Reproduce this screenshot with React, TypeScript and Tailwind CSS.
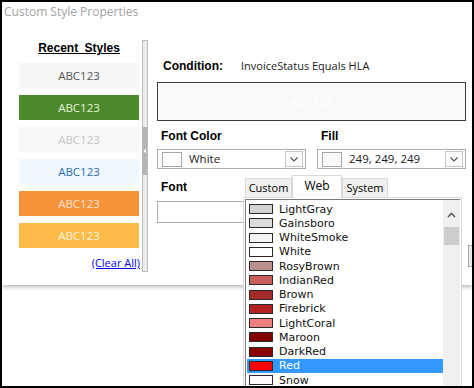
import clsx from 'clsx';

const recentStyles = [
  { box: 'bg-[#f6f6f6] text-[#555555]' },
  { box: 'bg-[#4a8a2b] text-[#e6f3d8]' },
  { box: 'bg-[#f7f7f7] text-[#c6c6c6]' },
  { box: 'bg-[#f0f8ff] text-[#2f6ea8]' },
  { box: 'bg-[#f7913a] text-[#fde4cf]' },
  { box: 'bg-[#fdbb48] text-[#fff1d8]' },
];

const webColors = [
  { name: 'LightGray', swatch: 'bg-[#d3d3d3]' },
  { name: 'Gainsboro', swatch: 'bg-[#dcdcdc]' },
  { name: 'WhiteSmoke', swatch: 'bg-[#f5f5f5]' },
  { name: 'White', swatch: 'bg-[#ffffff]' },
  { name: 'RosyBrown', swatch: 'bg-[#bc8f8f]' },
  { name: 'IndianRed', swatch: 'bg-[#cd5c5c]' },
  { name: 'Brown', swatch: 'bg-[#a52a2a]' },
  { name: 'Firebrick', swatch: 'bg-[#b22222]' },
  { name: 'LightCoral', swatch: 'bg-[#f08080]' },
  { name: 'Maroon', swatch: 'bg-[#800000]' },
  { name: 'DarkRed', swatch: 'bg-[#8b0000]' },
  { name: 'Red', swatch: 'bg-[#ff0000]', selected: true },
  { name: 'Snow', swatch: 'bg-[#fffafa]' },
];

function Chevron() {
  return (
    <svg width="8" height="5" viewBox="0 0 8 5">
      <path d="M0.5 0.5 L4 4 L7.5 0.5" fill="none" stroke="#505050" strokeWidth="1.1" />
    </svg>
  );
}

function ColorCombo({ swatch, label }: { swatch: string; label: string }) {
  return (
    <div className="flex h-[20px] w-[149px] items-center border border-[#adadad] bg-white pl-[4px] pr-[2px]">
      <span className={clsx('h-[15px] w-[20px] shrink-0 border border-[#a6a6a6]', swatch)} />
      <span className="ml-[7px] flex-1 text-[11.5px] leading-none text-[#1a1a1a]">{label}</span>
      <span className="flex h-[16px] w-[18px] items-center justify-center border border-[#c8c8c8] bg-[#fbfbfb]">
        <Chevron />
      </span>
    </div>
  );
}

function ColorPopup() {
  return (
    <div className="absolute left-[241px] top-[173px] w-[219px] [font-family:'Open_Sans',sans-serif]">
      {/* tab strip */}
      <div className="flex h-[22px] items-end pl-[2px] text-[11px] text-black">
        <div className="flex h-[19px] w-[47px] items-center justify-center border border-b-0 border-[#d9d9d9] bg-[#f0f0f0]">
          Custom
        </div>
        <div className="relative z-10 mb-[-1px] flex h-[23px] w-[50px] items-start justify-center border border-b-0 border-[#d9d9d9] bg-white pt-[1px] text-[12px]">
          Web
        </div>
        <div className="flex h-[19px] w-[46px] items-center justify-center border border-b-0 border-[#d9d9d9] bg-[#f0f0f0]">
          System
        </div>
      </div>

      {/* list */}
      <div className="h-[200px] border border-[#d9d9d9] bg-white p-[1px]">
        <div className="flex h-full border-l border-t border-[#7a7a7a]">
          <div className="flex-1 pt-[2px] [font-family:'DejaVu_Sans',sans-serif]">
            {webColors.map((c) => (
              <div
                key={c.name}
                className={clsx(
                  'ml-[1px] flex h-[14.25px] items-center gap-[6px] pl-[2px] text-[11px] leading-none',
                  c.selected ? 'bg-[#3399ff] text-white' : 'text-[#111111]'
                )}
              >
                <span className={clsx('h-[10px] w-[24px] shrink-0 border border-[#2a2a2a]', c.swatch)} />
                <span>{c.name}</span>
              </div>
            ))}
          </div>
          <div className="flex w-[17px] flex-col bg-[#f0f0f0]">
            <div className="flex h-[27px] items-center justify-center pt-[2px]">
              <svg width="9" height="6" viewBox="0 0 9 6">
                <path d="M1 5 L4.5 1.5 L8 5" fill="none" stroke="#606060" strokeWidth="1.6" />
              </svg>
            </div>
            <div className="mx-[1px] h-[18px] bg-[#cdcdcd]" />
          </div>
        </div>
      </div>
    </div>
  );
}

export default function App() {
  return (
    <div className="relative h-[388px] w-[474px] overflow-hidden border-2 border-black bg-white [font-family:'Open_Sans',sans-serif]">
      <div className="flex h-[283px] flex-col bg-white shadow-[0_2px_4px_rgba(0,0,0,0.28)]">
        {/* title */}
        <div className="h-[22px] pl-[2px] pt-[1px] text-[12px] leading-[18px] text-[#a3a3a3]">
          Custom Style Properties
        </div>

        <div className="flex flex-1">
          {/* recent styles */}
          <div className="w-[140px] pl-[17px]">
            <div className="w-[120px] pt-[16px] text-center text-[12px] font-bold leading-[16px] text-black underline [font-family:'Liberation_Sans',sans-serif] [word-spacing:3px]">
              Recent Styles
            </div>
            <div className="mt-[7px] flex w-[120px] flex-col gap-[7px]">
              {recentStyles.map((s, i) => (
                <div key={i} className={clsx('flex h-[25px] items-center justify-center text-[11.5px]', s.box)}>
                  ABC123
                </div>
              ))}
            </div>
            <div className="mt-[8px] w-[121px] text-right text-[11px] leading-[14px] text-[#0000ee] underline">
              (Clear All)
            </div>
          </div>

          {/* splitter */}
          <div className="mt-[16px] flex h-[232px] w-[6px] flex-col border border-[#bdbdbd] bg-[#ececec]">
            <div className="mt-[86px] flex h-[48px] items-center bg-[#b4b4b4]">
              <svg width="4" height="6" viewBox="0 0 4 6">
                <path d="M3 0.5 L0.5 3 L3 5.5 Z" fill="#ffffff" />
              </svg>
            </div>
          </div>

          {/* editor */}
          <div className="ml-[9px] flex flex-1 flex-col">
            <div className="mt-[34px] flex h-[16px] items-center pl-[6px]">
              <span className="w-[78px] text-[12px] font-bold text-black [font-family:'Liberation_Sans',sans-serif]">
                Condition:
              </span>
              <span className="text-[11px] text-[#1a1a1a]">InvoiceStatus Equals HLA</span>
            </div>

            <div className="mt-[8px] flex h-[39px] w-[309px] items-center justify-center border border-[#3c3c3c] bg-[#f9f9f9] text-[11.5px] text-white">
              ABC123
            </div>

            <div className="mt-[7px] flex gap-[11px] text-[12px] font-bold leading-[16px] text-black [font-family:'Liberation_Sans',sans-serif]">
              <span className="w-[149px] pl-[4px]">Font Color</span>
              <span className="pl-[4px]">Fill</span>
            </div>
            <div className="mt-[5px] flex gap-[11px]">
              <ColorCombo swatch="bg-white" label="White" />
              <ColorCombo swatch="bg-[#f9f9f9]" label="249, 249, 249" />
            </div>

            <div className="mt-[10px] pl-[4px] text-[12px] font-bold leading-[16px] text-black [font-family:'Liberation_Sans',sans-serif]">
              Font
            </div>
            <div className="mt-[6px] h-[22px] w-[305px] border border-[#adadad] bg-white" />
            <div className="mt-[22px] flex h-[22px] justify-end">
              <div className="mr-[-12px] h-[22px] w-[16px] border border-[#adadad] bg-[#e9e9e9]" />
            </div>
          </div>
        </div>
      </div>

      <ColorPopup />
    </div>
  );
}
